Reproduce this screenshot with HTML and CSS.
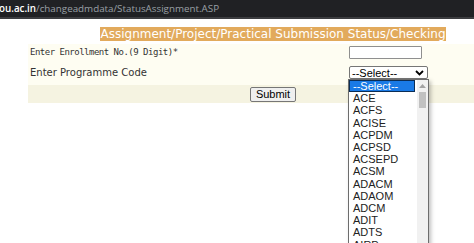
FILE: index.html
```html
<!DOCTYPE html>
<html lang="en">

<head>
    <meta charset="UTF-8">
    <meta name="viewport" content="width=device-width, initial-scale=1.0">
    <title>Assignment Status</title>
    <link rel="stylesheet" href="styles.css">
</head>

<body>

    <div class="urlbar">
        <span class="host">ou.ac.in</span>/changeadmdata/StatusAssignment.ASP
    </div>

    <div class="page">
        <div class="panel">
            <div class="title">
                <span>Assignment/Project/Practical Submission Status/Checking</span>
            </div>

            <div class="row first">
                <label class="mono" for="enrol">Enter Enrollment No.(9 Digit)*</label>
                <input id="enrol" type="text">
            </div>

            <div class="row second">
                <label for="prog">Enter Programme Code</label>
                <div class="select-wrap">
                    <div class="select" id="prog">
                        <span>--Select--</span>
                        <svg width="9" height="6" viewBox="0 0 9 6">
                            <path d="M1 1 L4.5 4.5 L8 1" fill="none" stroke="#000" stroke-width="1.8" />
                        </svg>
                    </div>

                    <!-- open dropdown list -->
                    <div class="options">
                        <ul>
                            <li class="picked">--Select--</li>
                            <li>ACE</li>
                            <li>ACFS</li>
                            <li>ACISE</li>
                            <li>ACPDM</li>
                            <li>ACPSD</li>
                            <li>ACSEPD</li>
                            <li>ACSM</li>
                            <li>ADACM</li>
                            <li>ADAOM</li>
                            <li>ADCM</li>
                            <li>ADIT</li>
                            <li>ADTS</li>
                            <li>AIRP</li>
                        </ul>
                        <div class="scroll">
                            <div class="arrow">
                                <svg width="7" height="4" viewBox="0 0 7 4">
                                    <path d="M0 4 L3.5 0 L7 4 Z" fill="#a3a3a3" />
                                </svg>
                            </div>
                            <div class="thumb"></div>
                        </div>
                    </div>
                </div>
            </div>

            <div class="submit-row">
                <button type="button">Submit</button>
            </div>
        </div>
    </div>

</body>

</html>
```

FILE: styles.css
```css
body {
    margin: 0;
    background-color: #fff;
    font-family: 'DejaVu Sans', sans-serif;
}

.urlbar {
    height: 17px;
    background-color: #202124;
    border-bottom: 2px solid #3c3d40;
    color: #9aa0a6;
    font-family: 'Open Sans', sans-serif;
    font-size: 9.8px;
    line-height: 18px;
    margin-left: -1px;
    white-space: nowrap;
}

.urlbar .host {
    color: #fff;
    font-weight: 600;
}

.page {
    overflow-x: clip;
    min-height: 224px;
}

.panel {
    margin-left: 28px;
    margin-top: 8px;
    width: 490px;
    background-color: #fefdf2;
    color: #333;
}

.title {
    height: 17px;
    text-align: center;
    font-size: 12px;
    line-height: 15px;
    background-color: #fff;
}

.title span {
    background-color: #e2aa5c;
    color: #fff;
}

.row {
    display: grid;
    grid-template-columns: 319px auto;
    align-items: center;
    padding-left: 2px;
    font-size: 10px;
}

.row.first {
    height: 16px;
}

.row.second {
    height: 25px;
}

.row label.mono {
    font-family: 'DejaVu Sans Mono', monospace;
    font-size: 9px;
    letter-spacing: -0.5px;
}

.row input {
    width: 69px;
    height: 11px;
    margin: 0;
    padding: 0 1px;
    border: 1px solid #8f8f8f;
    border-radius: 1px;
    background: #fff;
}

.select-wrap {
    position: relative;
    width: 79px;
}

.select {
    display: flex;
    justify-content: space-between;
    align-items: center;
    height: 11px;
    padding: 0 3px 0 2px;
    border: 1px solid #767676;
    border-radius: 2px;
    background: #fff;
    font-family: 'Liberation Sans', sans-serif;
    font-size: 11px;
    color: #000;
}

.options {
    position: absolute;
    top: 13px;
    left: -1px;
    width: 79px;
    height: 180px;
    display: flex;
    border: 1px solid #6d6d6d;
    background: #fff;
    box-shadow: 2px 2px 4px rgba(0, 0, 0, 0.25);
    overflow: hidden;
}

.options ul {
    flex: 1;
    list-style: none;
    margin: 0;
    padding: 0;
    font-family: 'Liberation Sans', sans-serif;
    font-size: 11px;
    line-height: 12.2px;
    color: #222;
}

.options li {
    padding-left: 4px;
}

.options li.picked {
    background-color: #1a7ae6;
    color: #fff;
    outline: 1px solid #0b2d55;
    outline-offset: -1px;
    margin-right: 2px;
}

.scroll {
    width: 11px;
    background-color: #f1f1f1;
}

.scroll .arrow {
    height: 12px;
    display: flex;
    justify-content: center;
    align-items: center;
}

.scroll .thumb {
    height: 16px;
    margin: 0 2px;
    background-color: #c1c1c1;
}

.submit-row {
    height: 18px;
    display: flex;
    justify-content: center;
    align-items: center;
    background-color: #f5f3e1;
}

.submit-row button {
    font-family: 'Liberation Sans', sans-serif;
    font-size: 11px;
    padding: 0 5px;
    height: 15px;
    border: 1px solid #767676;
    border-radius: 2px;
    background-color: #efefef;
    color: #000;
}
```
